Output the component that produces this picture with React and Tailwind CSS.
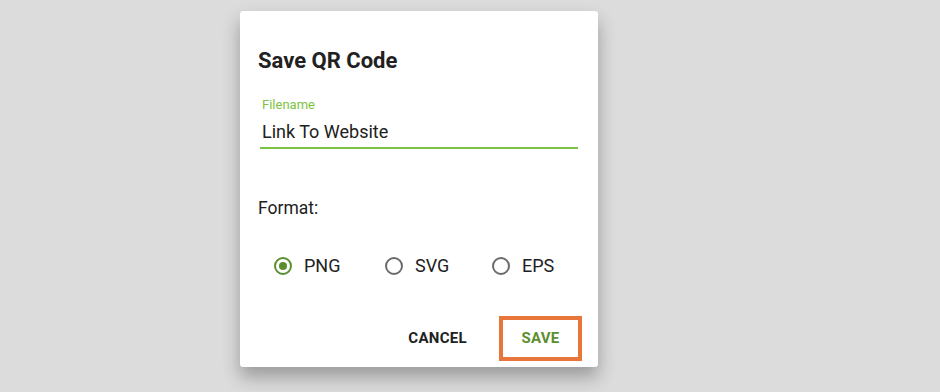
import { useState } from "react";

const Radio = ({ label, checked, onClick }) => (
  <button onClick={onClick} className="flex items-center gap-[12px] text-[18px] leading-[20px] text-[#212121]">
    <span
      className={
        "w-[18px] h-[18px] rounded-full border-2 flex items-center justify-center " +
        (checked ? "border-[#5b8f2e]" : "border-[#6b6b6b]")
      }
    >
      {checked && <span className="w-[8px] h-[8px] rounded-full bg-[#5b8f2e]" />}
    </span>
    {label}
  </button>
);

export default function App() {
  const [format, setFormat] = useState("PNG");

  return (
    <div className="w-[940px] h-[392px] bg-[#dcdcdc] flex pl-[240px] pt-[11px] font-['Roboto',sans-serif]">
      <div className="w-[358px] h-[356px] bg-white rounded-[3px] shadow-[0_10px_18px_rgba(0,0,0,0.3)] flex flex-col px-[18px]">
        <h2 className="mt-[36px] text-[22px] font-bold text-[#212121] leading-[28px]">Save QR Code</h2>

        <div className="mt-[22px] mx-[2px]">
          <p className="text-[13px] text-[#7cc242] leading-[16px] pl-[2px]">Filename</p>
          <div className="mt-[8px] border-b-2 border-[#7cc242] pb-[4px]">
            <p className="text-[18px] text-[#212121] leading-[22px] pl-[2px]">Link To Website</p>
          </div>
        </div>

        <p className="mt-[48px] text-[17.5px] text-[#212121] leading-[22px]">Format:</p>

        <div className="mt-[37px] pl-[16px] flex items-center">
          <div className="w-[111px]">
            <Radio label="PNG" checked={format === "PNG"} onClick={() => setFormat("PNG")} />
          </div>
          <div className="w-[107px]">
            <Radio label="SVG" checked={format === "SVG"} onClick={() => setFormat("SVG")} />
          </div>
          <Radio label="EPS" checked={format === "EPS"} onClick={() => setFormat("EPS")} />
        </div>

        <div className="mt-[40px] flex justify-end items-center gap-[32px]">
          <button className="text-[15px] font-bold text-[#212121] tracking-[0.3px]">CANCEL</button>
          <button className="w-[83px] h-[45px] border-[4px] border-[#e8763a] text-[15px] font-bold text-[#5b8f2e] tracking-[0.3px] mr-[-2px]">
            SAVE
          </button>
        </div>
      </div>
    </div>
  );
}
